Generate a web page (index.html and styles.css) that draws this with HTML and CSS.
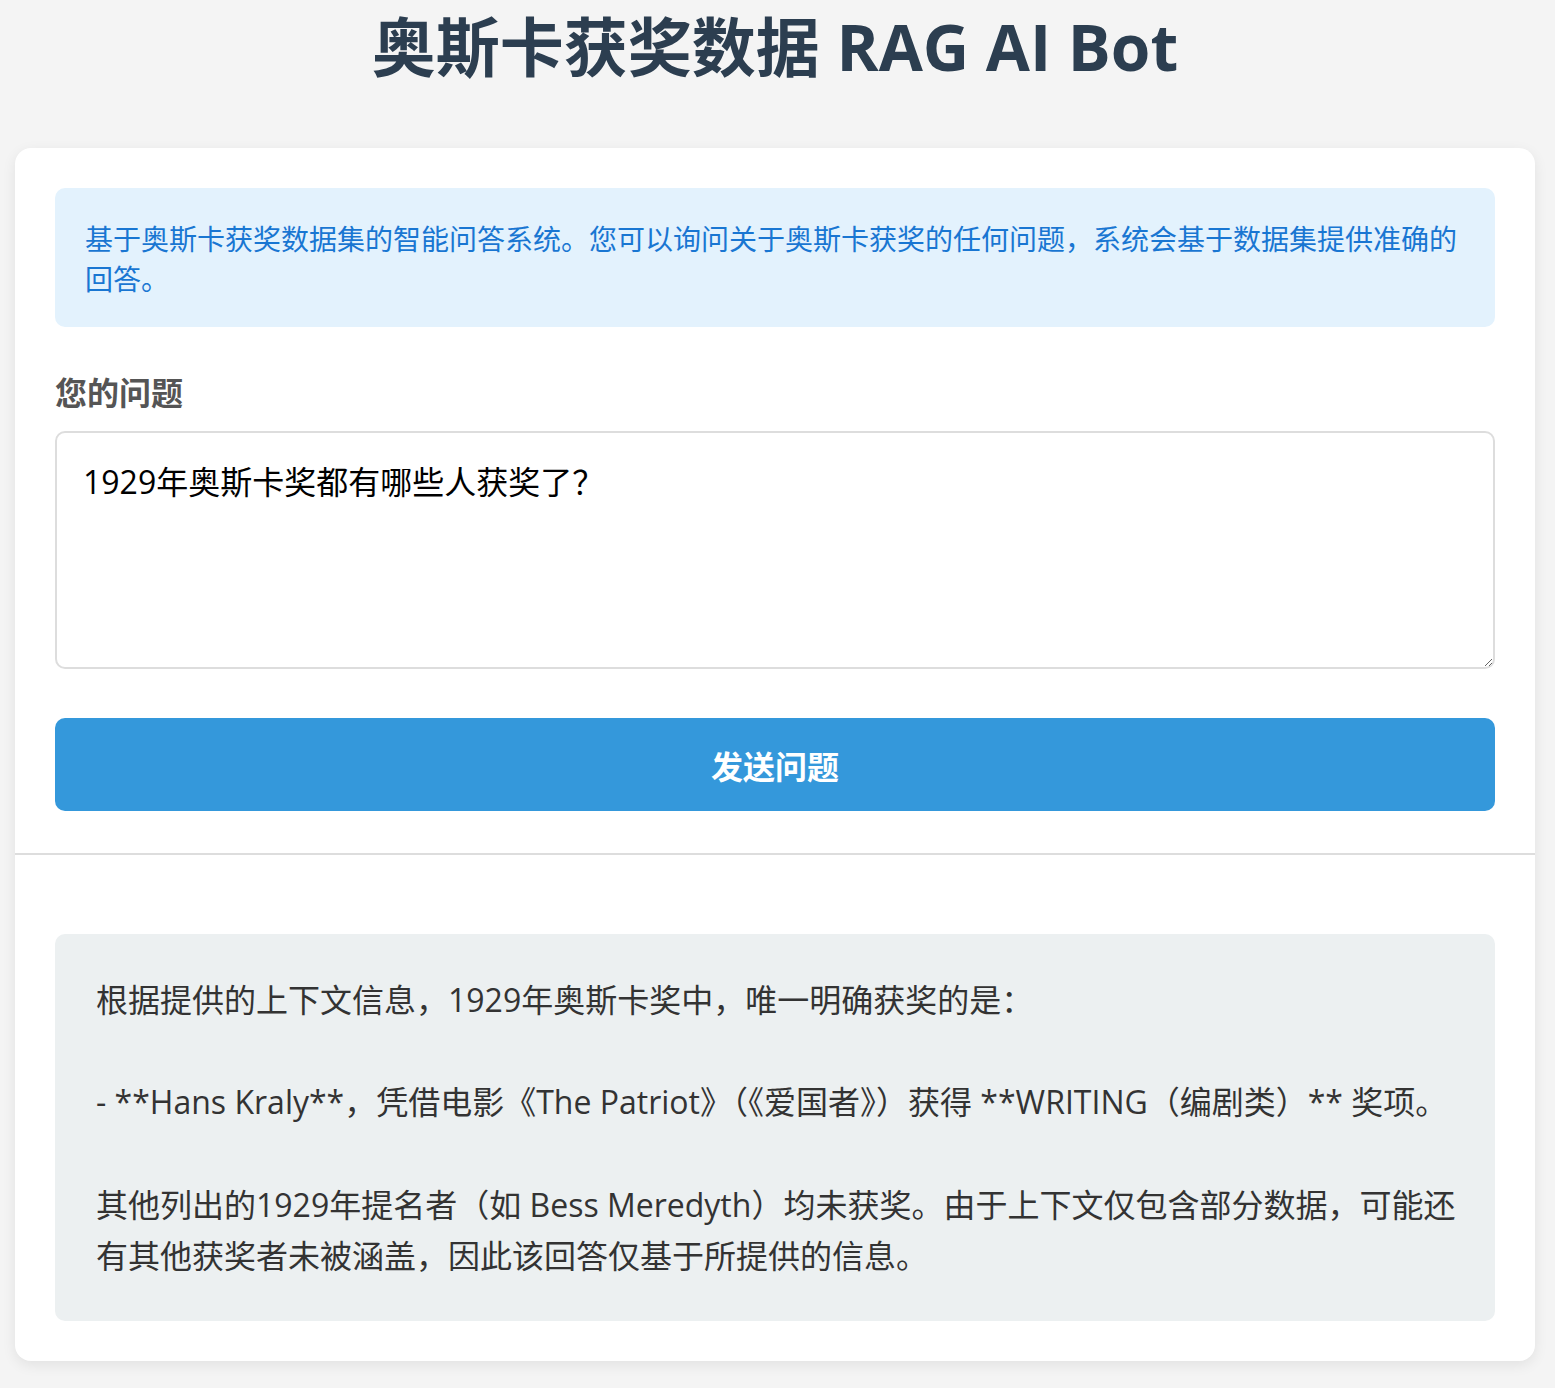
FILE: index.html
```html
<!DOCTYPE html>
<html lang="zh-CN">
<head>
    <meta charset="UTF-8">
    <meta name="viewport" content="width=device-width, initial-scale=1.0">
    <title>奥斯卡获奖数据 RAG AI Bot</title>
    <link rel="stylesheet" href="styles.css">
</head>
<body>
    <div id="wrapper">
        <h1 class="title">奥斯卡获奖数据 RAG AI Bot</h1>
        <div class="card">
            <div class="intro">基于奥斯卡获奖数据集的智能问答系统。您可以询问关于奥斯卡获奖的任何问题，系统会基于数据集提供准确的回答。</div>
            <label class="label" for="question">您的问题</label>
            <textarea id="question" class="question">1929年奥斯卡奖都有哪些人获奖了？</textarea>
            <button class="send">发送问题</button>
            <div class="result">
                <div class="answer">根据提供的上下文信息，1929年奥斯卡奖中，唯一明确获奖的是：

- **Hans Kraly**，凭借电影《The Patriot》（《爱国者》）获得 **WRITING（编剧类）** 奖项。

其他列出的1929年提名者（如 Bess Meredyth）均未获奖。由于上下文仅包含部分数据，可能还有其他获奖者未被涵盖，因此该回答仅基于所提供的信息。</div>
            </div>
        </div>
    </div>
</body>
</html>
```

FILE: styles.css
```css
body{
    margin: 0;
    background: #f4f4f4;
    font-family: "Segoe UI", "Open Sans", "Noto Sans CJK SC", sans-serif;
}
#wrapper{
    width: 1520px;
    padding: 8px 0 28px 15px;
}
.title{
    margin: 0 0 63px;
    font-size: 64px;
    line-height: 77px;
    text-align: center;
    color: #2c3e50;
}
.card{
    background: #fff;
    border-radius: 16px;
    padding: 40px;
    box-shadow: 0 4px 14px rgba(0,0,0,0.08);
}
.intro{
    background: #e3f2fd;
    color: #1976d2;
    border-radius: 10px;
    padding: 31px 30px 28px;
    font-size: 28px;
    line-height: 40px;
}
.label{
    display: block;
    margin: 47px 0 19px;
    font-size: 32px;
    line-height: 38px;
    font-weight: bold;
    color: #555;
}
.question{
    display: block;
    width: 100%;
    height: 238px;
    box-sizing: border-box;
    padding: 24px 26px;
    border: 2px solid #ddd;
    border-radius: 10px;
    font-family: inherit;
    font-size: 32px;
    color: #000;
}
.send{
    display: block;
    width: 100%;
    height: 93px;
    margin-top: 49px;
    border: none;
    border-radius: 10px;
    background: #3498db;
    color: #fff;
    font-family: inherit;
    font-size: 32px;
    font-weight: bold;
}
.result{
    margin: 42px -40px 0;
    padding: 79px 40px 0;
    border-top: 2px solid #ddd;
}
.answer{
    background: #ecf0f1;
    border-radius: 10px;
    padding: 40px 34px 40px 41px;
    white-space: pre-wrap;
    font-size: 32px;
    line-height: 1.6;
    color: #333;
}
```
